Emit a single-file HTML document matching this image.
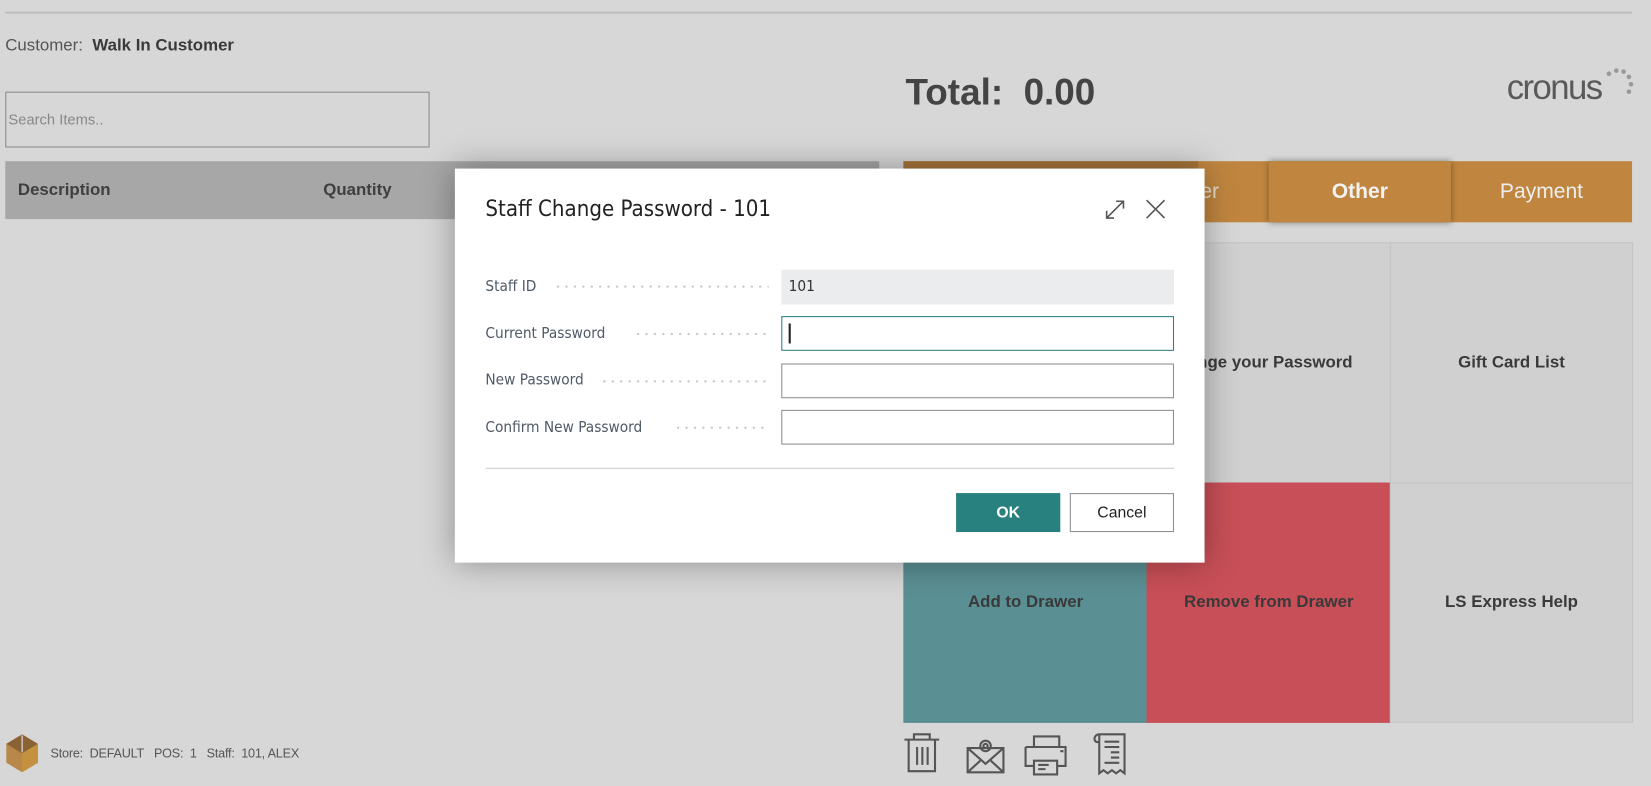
<!DOCTYPE html>
<html><head><meta charset="utf-8"><style>
html,body{margin:0;padding:0;width:1651px;height:786px;overflow:hidden;background:#d7d7d7;}
#w{position:absolute;left:0;top:0;width:1568px;height:746px;transform:scale(1.05293,1.0536);transform-origin:0 0;font-family:"Liberation Sans",sans-serif;color:#444;}
.a{position:absolute;}
.tile{position:absolute;box-sizing:border-box;border:1px solid #c4c4c4;background:#d0d0d0;display:flex;align-items:center;justify-content:center;font-weight:bold;font-size:16px;color:#3a3a3a;}
.lbl{position:absolute;left:461px;font-family:"DejaVu Sans Condensed","Liberation Sans",sans-serif;font-size:14.5px;color:#505a66;}
.dots{position:absolute;height:2px;background-image:radial-gradient(circle,#c3c6ca 1px,transparent 1.2px);background-size:8px 2px;}
.inp{position:absolute;left:742px;width:373px;height:33px;box-sizing:border-box;border:1px solid #8a8d91;background:#fff;}
</style></head><body><div id="w">
<div class="a" style="left:5px;top:11px;width:1545px;height:2px;background:#bdbdbd"></div>
<div class="a" style="left:5px;top:35px;font-size:16px;color:#555">Customer:&nbsp; <b style="color:#3a3a3a">Walk In Customer</b></div>
<div class="a" style="left:5px;top:87px;width:403px;height:53px;box-sizing:border-box;border:1px solid #8b8b8b;font-size:14px;color:#888;line-height:51px;padding-left:2px">Search Items..</div>
<div class="a" style="left:5px;top:153px;width:830px;height:55px;background:#a6a7a6"></div>
<div class="a" style="left:17px;top:172px;font-size:16px;font-weight:bold;color:#3f3f3f">Description</div>
<div class="a" style="left:307px;top:172px;font-size:16px;font-weight:bold;color:#3f3f3f">Quantity</div>
<div class="a" style="left:860px;top:68px;font-size:35px;font-weight:bold;color:#444">Total:&nbsp;&nbsp;0.00</div>
<div class="a" style="left:1431px;top:64px;font-size:33px;color:#5a5a5a;letter-spacing:-1.5px">cronus</div>
<svg class="a" style="left:1510px;top:60px" width="45" height="40"><g fill="#999"><circle cx="18" cy="10" r="2.2"/><circle cx="25" cy="7" r="2.2"/><circle cx="32" cy="8" r="2.2"/><circle cx="37" cy="13" r="2.2"/><circle cx="39" cy="20" r="2.2"/><circle cx="37" cy="27" r="2.2"/></g></svg>
<div class="a" style="left:858px;top:153px;width:692px;height:58px;background:#c0863f"></div>
<div class="a" style="left:858px;top:153px;width:280px;height:58px;background:#a7753a"></div>
<div class="a" style="left:1140px;top:171px;font-size:20px;color:#e8dccc">er</div>
<div class="a" style="left:1205px;top:153px;width:173px;height:58px;background:#c0863f;box-shadow:0 0 6px rgba(0,0,0,.4);color:#f2f2f2;font-size:20px;font-weight:bold;text-align:center;line-height:58px">Other</div>
<div class="a" style="left:1378px;top:153px;width:172px;height:58px;color:#eee;font-size:20px;text-align:center;line-height:58px">Payment</div>
<div class="tile" style="left:858px;top:230px;width:232px;height:229px"></div>
<div class="tile" style="left:1089px;top:230px;width:232px;height:229px;justify-content:flex-start;padding-left:47px">nge your Password</div>
<div class="tile" style="left:1320px;top:230px;width:231px;height:229px">Gift Card List</div>
<div class="tile" style="left:858px;top:458px;width:232px;height:228px;background:#5a8f93;border-color:#5a8f93">Add to Drawer</div>
<div class="tile" style="left:1089px;top:458px;width:232px;height:228px;background:#c84f57;border-color:#c84f57">Remove from Drawer</div>
<div class="tile" style="left:1320px;top:458px;width:231px;height:228px">LS Express Help</div>
<svg class="a" style="left:858px;top:694px" width="220" height="42" fill="none" stroke="#555" stroke-width="2">
<path d="M1 8H34M10 8V3H25V8M5 8V38H30V8M13 15V32M18 15V32M23 15V32"/>
<path d="M61 16H95V39H61ZM61 16L78 31L95 16M61 39L73 28M95 39L83 28"/>
<circle cx="78" cy="14" r="5"/><circle cx="78" cy="14" r="2"/>
<path d="M124 15V5H148V15M116 15H154V33H146M124 33H116V15M124 28H146V41H124ZM128 32H138M128 36H135M149 19H152"/>
<path d="M186 3H210V40L206 37L202 40L198 37L194 40L190 37L186 40V3M186 3C180 3 180 12 186 10M191 10H205M191 15H205M197 20H205M197 25H205M191 30H205"/>
</svg>
<svg class="a" style="left:5px;top:697px" width="32" height="36"><path d="M16 0L31 9V27L16 36L1 27V9Z" fill="#b8874a"/><path d="M16 0L31 9L16 18L1 9Z" fill="#8a6236"/><path d="M16 18V36L31 27V9Z" fill="#c4923e"/><path d="M16 1V17" stroke="#eee" stroke-width="1"/></svg>
<div class="a" style="left:48px;top:708px;font-size:12px;color:#555;letter-spacing:-0.2px">Store:&nbsp; DEFAULT&nbsp;&nbsp; POS:&nbsp; 1&nbsp;&nbsp; Staff:&nbsp; 101, ALEX</div>
<!-- dialog -->
<div class="a" style="left:432px;top:160px;width:712px;height:374px;background:#fff;box-shadow:0 0 30px rgba(0,0,0,.35)"></div>
<div class="a" style="left:461px;top:186px;font-family:'DejaVu Sans Condensed','Liberation Sans',sans-serif;font-size:21px;color:#222">Staff Change Password - 101</div>
<svg class="a" style="left:1048px;top:187px" width="64" height="24" fill="none" stroke="#555" stroke-width="1.5"><path d="M3 20L19 4M12 4H19V11M3 13V20H10"/><path d="M41 3L58 20M58 3L41 20"/></svg>
<div class="lbl" style="top:264px">Staff ID</div><div class="dots" style="left:526px;top:271px;width:204px"></div>
<div class="lbl" style="top:309px">Current Password</div><div class="dots" style="left:602px;top:316px;width:128px"></div>
<div class="lbl" style="top:353px">New Password</div><div class="dots" style="left:570px;top:361px;width:160px"></div>
<div class="lbl" style="top:398px">Confirm New Password</div><div class="dots" style="left:640px;top:405px;width:90px"></div>
<div class="a" style="left:742px;top:256px;width:373px;height:33px;background:#ebecee;font-size:14.5px;color:#333;line-height:33px;padding-left:7px;box-sizing:border-box;font-family:'DejaVu Sans Condensed','Liberation Sans',sans-serif">101</div>
<div class="inp" style="top:300px;border-color:#2b8083"><div style="position:absolute;left:6px;top:6px;width:2px;height:19px;background:#222"></div></div>
<div class="inp" style="top:345px"></div>
<div class="inp" style="top:389px"></div>
<div class="a" style="left:461px;top:444px;width:654px;height:1px;background:#ccc"></div>
<div class="a" style="left:908px;top:468px;width:99px;height:37px;background:#28807f;color:#fff;font-weight:bold;font-size:15px;text-align:center;line-height:37px">OK</div>
<div class="a" style="left:1016px;top:468px;width:99px;height:37px;box-sizing:border-box;border:1px solid #8a8d91;background:#fff;color:#222;font-size:15px;text-align:center;line-height:35px">Cancel</div>
</div></body></html>
